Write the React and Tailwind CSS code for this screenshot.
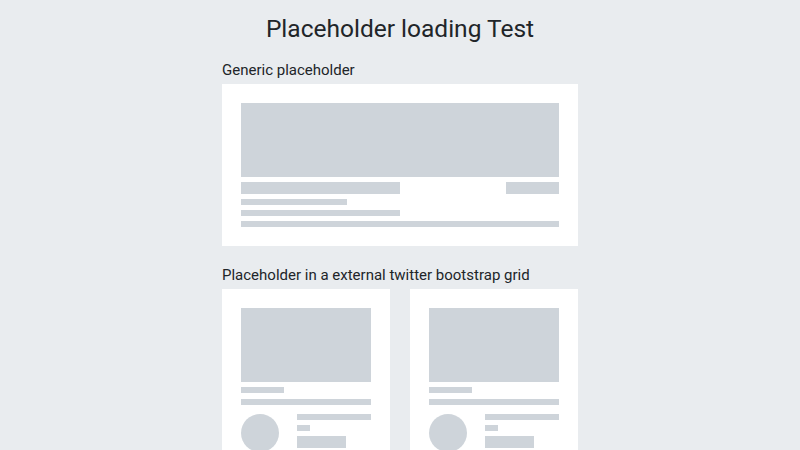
// Skeleton placeholders shown while content loads
function Bar({ className = '' }) {
  return <div className={`bg-[#ced4da] ${className}`} />;
}

function GenericCard() {
  return (
    <div className="bg-white px-[19px] py-[19px] flex flex-col gap-[5px]">
      <Bar className="h-[74px]" />
      <div className="flex justify-between">
        <Bar className="h-[12px] w-1/2" />
        <Bar className="h-[12px] w-1/6" />
      </div>
      <Bar className="h-[6px] w-1/3" />
      <Bar className="h-[6px] w-1/2" />
      <Bar className="h-[6px] w-full" />
    </div>
  );
}

function GridCard() {
  return (
    <div className="bg-white px-[19px] pt-[19px] pb-[19px] flex flex-col">
      <Bar className="h-[74px]" />
      <Bar className="h-[6px] w-1/3 mt-[5px]" />
      <Bar className="h-[6px] w-full mt-[6px]" />
      <div className="flex mt-[9px]">
        <div className="w-[38px] h-[38px] rounded-full bg-[#ced4da] shrink-0" />
        <div className="ml-[18px] flex-1 flex flex-col gap-[5px]">
          <Bar className="h-[6px] w-full" />
          <Bar className="h-[6px] w-[13px]" />
          <Bar className="h-[12px] w-[49px]" />
        </div>
      </div>
    </div>
  );
}

export default function App() {
  return (
    <div
      className="min-h-[450px] bg-[#e9ecef] text-[#212529] pt-[13px]"
      style={{ fontFamily: 'Roboto, "Noto Sans", sans-serif' }}
    >
      <div className="w-[356px] mx-auto">
        <h1 className="text-center text-[24.5px] leading-[32px] whitespace-nowrap -mx-10">
          Placeholder loading Test
        </h1>

        <h2 className="mt-[15px] mb-[4px] text-[15px] leading-[20px]">Generic placeholder</h2>
        <GenericCard />

        <h2 className="mt-[19px] mb-[4px] text-[15px] leading-[20px] whitespace-nowrap">
          Placeholder in a external twitter bootstrap grid
        </h2>
        <div className="grid grid-cols-2 gap-[20px]">
          <GridCard />
          <GridCard />
        </div>
      </div>
    </div>
  );
}
